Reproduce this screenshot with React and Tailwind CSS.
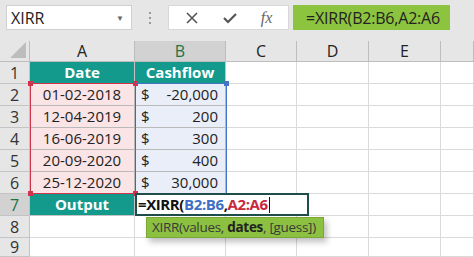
import React from 'react';

const font = { fontFamily: '"Open Sans", "Liberation Sans", sans-serif' };

const dates = ['01-02-2018', '12-04-2019', '16-06-2019', '20-09-2020', '25-12-2020'];
const flows = ['-20,000', '200', '300', '400', '30,000'];

const RowHead = ({ n, active }) => (
  <div
    className={`flex items-center justify-center border-r border-b border-[#c4c4c4] text-[16px] leading-none ${
      active ? 'bg-[#d2d2d2] text-[#217346]' : 'bg-[#e6e6e6] text-[#333]'
    }`}
  >
    {n}
  </div>
);

const Empty = () => <div className="border-r border-b border-[#dadada] bg-white" />;

const Corner = ({ color, className }) => (
  <div className={`absolute w-[5px] h-[5px] ${color} ${className}`} />
);

export default function App() {
  return (
    <div className="relative w-[474px] h-[257px] overflow-hidden bg-white" style={font}>
      {/* formula bar */}
      <div className="h-[41px] bg-[#e6e6e6] flex items-start pt-[5px] pl-[6px]">
        <div className="w-[126px] h-[25px] bg-white border border-[#d0d0d0] flex items-center justify-between pl-[4px] pr-[7px] text-[16px] text-[#222]">
          <span>XIRR</span>
          <span className="text-[8px] text-[#666]">▼</span>
        </div>
        <div className="w-[36px] h-[25px] flex flex-col items-center justify-center gap-[3px]">
          <span className="w-[2px] h-[2px] bg-[#999]" />
          <span className="w-[2px] h-[2px] bg-[#999]" />
          <span className="w-[2px] h-[2px] bg-[#999]" />
        </div>
        <div className="w-[121px] h-[25px] bg-white border border-[#d8d8d8] flex items-center justify-around px-[4px] text-[#555]">
          <svg width="14" height="14" viewBox="0 0 14 14">
            <path d="M2 2 L12 12 M12 2 L2 12" stroke="#555" strokeWidth="1.6" />
          </svg>
          <svg width="16" height="14" viewBox="0 0 16 14">
            <path d="M2 7 L6 11 L14 3" stroke="#555" strokeWidth="2.2" fill="none" />
          </svg>
          <span className="italic text-[16px] text-[#666]" style={{ fontFamily: '"Liberation Serif", serif' }}>
            fx
          </span>
        </div>
        <div className="w-[157px] h-[25px] ml-[4px] bg-[#8dc43f] flex items-center pl-[13px] text-[16px] text-[#222] tracking-[-0.2px]">
          =XIRR(B2:B6,A2:A6
        </div>
      </div>

      {/* sheet grid */}
      <div className="grid grid-cols-[30px_105px_91px_71px_72px_72px_33px] grid-rows-[21px_repeat(8,22px)_19px]">
        <div className="bg-[#e6e6e6] border-r border-b border-[#bdbdbd] flex items-end justify-end pr-[3px] pb-[3px]">
          <svg width="16" height="16" viewBox="0 0 16 16">
            <path d="M16 0 L16 16 L0 16 Z" fill="#bdbdbd" />
          </svg>
        </div>
        {['A', 'B', 'C', 'D', 'E', ''].map((c) => (
          <div
            key={c || 'F'}
            className={`flex items-center justify-center border-r border-b border-[#bdbdbd] text-[16px] ${
              c === 'B' ? 'bg-[#d2d2d2] text-[#217346]' : 'bg-[#e6e6e6] text-[#222]'
            }`}
          >
            {c}
          </div>
        ))}

        <RowHead n={1} />
        <div className="bg-[#14998d] border-r border-b border-[#c4c4c4] flex items-center justify-center text-white font-bold text-[15px]">
          Date
        </div>
        <div className="bg-[#14998d] border-r border-b border-[#c4c4c4] flex items-center justify-center text-white font-bold text-[15px]">
          Cashflow
        </div>
        <Empty />
        <Empty />
        <Empty />
        <Empty />

        {dates.map((d, i) => (
          <React.Fragment key={d}>
            <RowHead n={i + 2} />
            <div className="bg-[#fbe4e5] border-r border-b border-[#b9b9b9] flex items-center justify-center text-[15px] text-[#222]">
              {d}
            </div>
            <div className="bg-[#e9eef8] border-r border-b border-[#b9b9b9] flex items-center justify-between pl-[6px] pr-[7px] text-[15px] text-[#222]">
              <span>$</span>
              <span>{flows[i]}</span>
            </div>
            <Empty />
            <Empty />
            <Empty />
            <Empty />
          </React.Fragment>
        ))}

        <RowHead n={7} active />
        <div className="bg-[#14998d] border-r border-b border-[#c4c4c4] flex items-center justify-center text-white font-bold text-[15px]">
          Output
        </div>
        <Empty />
        <Empty />
        <Empty />
        <Empty />
        <Empty />

        {[8, 9].map((n) => (
          <React.Fragment key={n}>
            <RowHead n={n} />
            <Empty />
            <Empty />
            <Empty />
            <Empty />
            <Empty />
            <Empty />
          </React.Fragment>
        ))}
      </div>

      {/* range highlights */}
      <div className="absolute left-[30px] top-[83px] w-[106px] h-[111px] border border-[#d1334a] pointer-events-none">
        <Corner color="bg-[#d1334a]" className="-left-[3px] -top-[3px]" />
        <Corner color="bg-[#d1334a]" className="-right-[3px] -top-[3px]" />
        <Corner color="bg-[#d1334a]" className="-left-[3px] -bottom-[3px]" />
        <Corner color="bg-[#d1334a]" className="-right-[3px] -bottom-[3px]" />
      </div>
      <div className="absolute left-[136px] top-[83px] w-[91px] h-[111px] border-t border-r border-b border-[#4472c4] pointer-events-none">
        <Corner color="bg-[#4472c4]" className="-right-[3px] -top-[3px]" />
      </div>

      {/* editing cell */}
      <div className="absolute left-[135px] top-[193px] w-[174px] h-[23px] bg-white border-2 border-[#1f4e4a] flex items-center pl-[1px] font-bold text-[15px] text-[#111] whitespace-nowrap tracking-[-0.4px]">
        <span>=XIRR(</span>
        <span className="text-[#3f6fc6]">B2:B6</span>
        <span>,</span>
        <span className="text-[#c8283c]">A2:A6</span>
        <span className="w-[1px] h-[16px] bg-[#111] ml-[1px]" />
      </div>

      {/* tooltip */}
      <div className="absolute left-[146px] top-[217px] w-[178px] h-[21px] bg-[#8cc040] border border-[#7aa837] flex items-center pl-[5px] text-[13.5px] text-[#3a3a3a] whitespace-nowrap tracking-[-0.3px] shadow-[3px_4px_6px_rgba(0,0,0,0.25)]">
        XIRR(values,&nbsp;<b className="text-[#222]">dates</b>, [guess])
      </div>
    </div>
  );
}
